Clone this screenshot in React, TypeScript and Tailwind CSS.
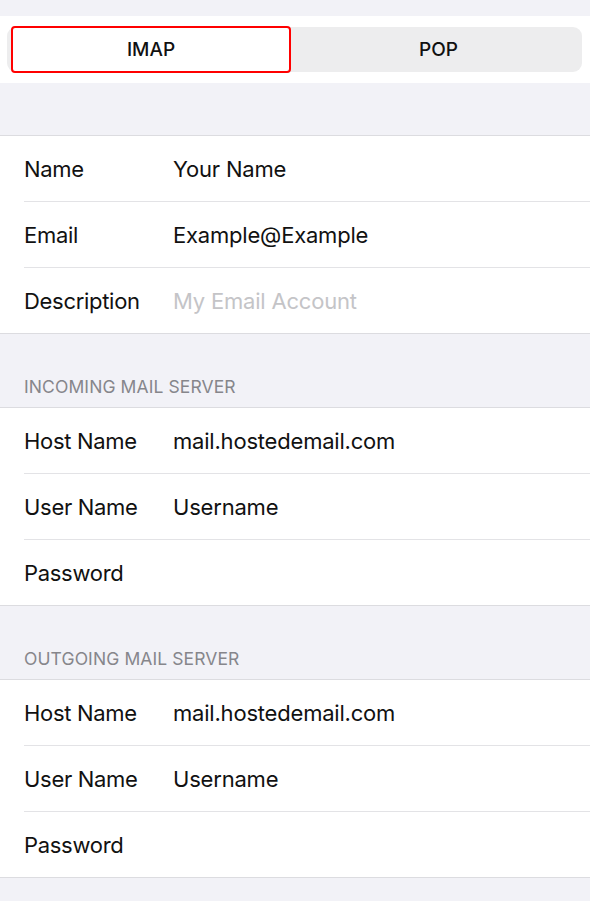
import React from "react";

type Row = { label: string; value?: string; placeholder?: boolean };

function Group({ rows }: { rows: Row[] }) {
  return (
    <div className="bg-white border-y border-[#dcdce0]">
      {rows.map((r, i) => (
        <div key={i} className="pl-6">
          <div
            className={
              "flex items-center pt-[2px] " +
              (i < rows.length - 1 ? "h-[66px] border-b border-[#e3e3e6]" : "h-[65px]")
            }
          >
            <div className="w-[149px] shrink-0 text-[22px] text-[#111] tracking-[-0.3px]">{r.label}</div>
            {r.value && (
              <div
                className={
                  "text-[22px] tracking-[-0.2px] " +
                  (r.placeholder ? "text-[#c4c4c7]" : "text-[#111]")
                }
              >
                {r.value}
              </div>
            )}
          </div>
        </div>
      ))}
    </div>
  );
}

function Header({ title }: { title: string }) {
  return (
    <div className="h-[73px] flex items-end pl-6 pb-[7px]">
      <span className="text-[17.5px] text-[#86868b] tracking-[0.1px]">{title}</span>
    </div>
  );
}

export default function App() {
  return (
    <div
      className="w-[590px] h-[901px] overflow-hidden bg-[#f2f2f7]"
      style={{ fontFamily: "Inter, 'Noto Sans', sans-serif" }}
    >
      <div className="h-4" />
      <div className="bg-white h-[67px] pl-[7px] pr-[8px] flex items-center">
        <div className="w-full h-[45px] rounded-[9px] bg-[#ededee] flex items-center">
          <div className="w-[280px] h-[47px] ml-[4px] shrink-0 bg-white border-2 border-[#f00] rounded-[4px] flex items-center justify-center pt-[2px] text-[19px] font-medium text-[#111]">
            IMAP
          </div>
          <div className="flex-1 h-full flex items-center justify-center pl-[4px] pt-[2px] text-[19px] font-medium text-[#111]">
            POP
          </div>
        </div>
      </div>
      <div className="h-[52px]" />
      <Group
        rows={[
          { label: "Name", value: "Your Name" },
          { label: "Email", value: "Example@Example" },
          { label: "Description", value: "My Email Account", placeholder: true },
        ]}
      />
      <Header title="INCOMING MAIL SERVER" />
      <Group
        rows={[
          { label: "Host Name", value: "mail.hostedemail.com" },
          { label: "User Name", value: "Username" },
          { label: "Password" },
        ]}
      />
      <Header title="OUTGOING MAIL SERVER" />
      <Group
        rows={[
          { label: "Host Name", value: "mail.hostedemail.com" },
          { label: "User Name", value: "Username" },
          { label: "Password" },
        ]}
      />
    </div>
  );
}
